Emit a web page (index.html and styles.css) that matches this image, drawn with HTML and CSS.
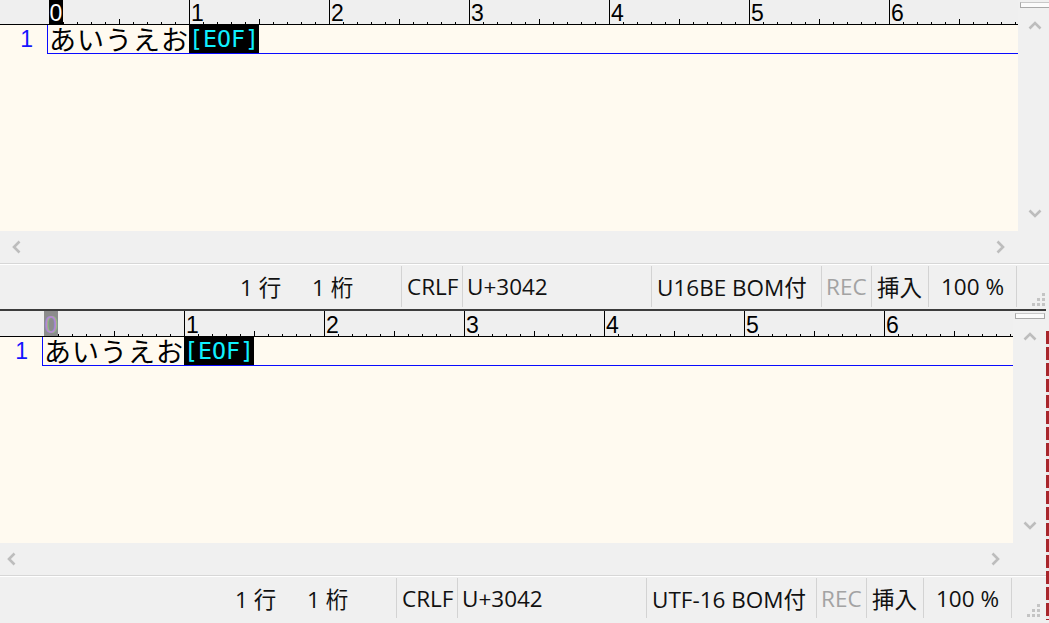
FILE: index.html
```html
<!DOCTYPE html>
<html lang="ja">
<head>
<meta charset="utf-8">
<title>Editor</title>
<link rel="stylesheet" href="styles.css">
</head>
<body>
<div class="desk">
  <section class="win win-a">
    <div class="main">
      <div class="pane-left">
        <div class="ruler">
          <div class="cell"><span class="num zero">0</span></div>
          <div class="cell"><span class="num">1</span></div>
          <div class="cell"><span class="num">2</span></div>
          <div class="cell"><span class="num">3</span></div>
          <div class="cell"><span class="num">4</span></div>
          <div class="cell"><span class="num">5</span></div>
          <div class="cell"><span class="num">6</span></div>
        </div>
        <div class="editor">
          <div class="line">
            <span class="lnum">1</span>
            <span class="text"><span class="jp">あいうえお</span><span class="eof">[EOF]</span></span>
          </div>
        </div>
      </div>
      <div class="vscroll">
        <div class="split-box"></div>
        <svg class="arr-v up" width="14" height="10" viewBox="0 0 14 10"><polyline points="1.5,8.5 7,3 12.5,8.5"/></svg>
        <svg class="arr-v down" width="14" height="10" viewBox="0 0 14 10"><polyline points="1.5,1.5 7,7 12.5,1.5"/></svg>
      </div>
    </div>
    <div class="hbar">
      <div class="hscroll">
        <svg class="arr-h" width="10" height="14" viewBox="0 0 10 14"><polyline points="8.5,1.5 3,7 8.5,12.5"/></svg>
        <svg class="arr-h" width="10" height="14" viewBox="0 0 10 14"><polyline points="1.5,1.5 7,7 1.5,12.5"/></svg>
      </div>
      <div class="corner"></div>
    </div>
    <div class="status">
      <div class="sp sp-pos"><span class="pos-row">1 行</span><span>1 桁</span></div>
      <div class="sp sp-eol">CRLF</div>
      <div class="sp sp-code">U+3042</div>
      <div class="sp sp-enc">U16BE BOM付</div>
      <div class="sp sp-rec">REC</div>
      <div class="sp sp-ins">挿入</div>
      <div class="sp sp-zoom">100 %</div>
      <div class="grip">
        <svg width="14" height="14" viewBox="0 0 14 14"><rect x="11" y="1" width="3" height="3"/><rect x="6" y="6" width="3" height="3"/><rect x="11" y="6" width="3" height="3"/><rect x="1" y="11" width="3" height="3"/><rect x="6" y="11" width="3" height="3"/><rect x="11" y="11" width="3" height="3"/></svg>
      </div>
    </div>
  </section>

  <div class="row-b">
    <section class="win win-b">
      <div class="main">
        <div class="pane-left">
          <div class="ruler">
            <div class="cell"><span class="num zero ghost">0</span></div>
            <div class="cell"><span class="num">1</span></div>
            <div class="cell"><span class="num">2</span></div>
            <div class="cell"><span class="num">3</span></div>
            <div class="cell"><span class="num">4</span></div>
            <div class="cell"><span class="num">5</span></div>
            <div class="cell"><span class="num">6</span></div>
          </div>
          <div class="editor">
            <div class="line">
              <span class="lnum">1</span>
              <span class="text"><span class="jp">あいうえお</span><span class="eof">[EOF]</span></span>
            </div>
          </div>
        </div>
        <div class="vscroll">
          <div class="split-box"></div>
          <svg class="arr-v up" width="14" height="10" viewBox="0 0 14 10"><polyline points="1.5,8.5 7,3 12.5,8.5"/></svg>
          <svg class="arr-v down" width="14" height="10" viewBox="0 0 14 10"><polyline points="1.5,1.5 7,7 12.5,1.5"/></svg>
        </div>
      </div>
      <div class="hbar">
        <div class="hscroll">
          <svg class="arr-h" width="10" height="14" viewBox="0 0 10 14"><polyline points="8.5,1.5 3,7 8.5,12.5"/></svg>
          <svg class="arr-h" width="10" height="14" viewBox="0 0 10 14"><polyline points="1.5,1.5 7,7 1.5,12.5"/></svg>
        </div>
        <div class="corner"></div>
      </div>
      <div class="status">
        <div class="sp sp-pos"><span class="pos-row">1 行</span><span>1 桁</span></div>
        <div class="sp sp-eol">CRLF</div>
        <div class="sp sp-code">U+3042</div>
        <div class="sp sp-enc">UTF-16 BOM付</div>
        <div class="sp sp-rec">REC</div>
        <div class="sp sp-ins">挿入</div>
        <div class="sp sp-zoom">100 %</div>
        <div class="grip">
          <svg width="14" height="14" viewBox="0 0 14 14"><rect x="11" y="1" width="3" height="3"/><rect x="6" y="6" width="3" height="3"/><rect x="11" y="6" width="3" height="3"/><rect x="1" y="11" width="3" height="3"/><rect x="6" y="11" width="3" height="3"/><rect x="11" y="11" width="3" height="3"/></svg>
        </div>
      </div>
    </section>
    <div class="edge"></div>
  </div>
</div>
</body>
</html>
```

FILE: styles.css
```css
html, body {
  margin: 0;
  padding: 0;
}

body {
  width: 1049px;
  height: 623px;
  overflow: hidden;
  background: #f0f0f0;
  color: #000;
}

.desk {
  display: flex;
  flex-direction: column;
  width: 1049px;
}

.win {
  flex: none;
  width: 1051px;
  background: #f0f0f0;
  display: flex;
  flex-direction: column;
}

.row-b {
  display: flex;
}

.win-b {
  margin-left: -5px;
  border-top: 2px solid #3c3c3c;
}

.edge {
  flex: none;
  width: 3px;
  margin-top: 22px;
  background: repeating-linear-gradient(to bottom, #a8262b 0 13px, #e9e9e9 13px 16px);
}

/* ---------- main: ruler + editor + vertical scrollbar ---------- */
.main {
  display: flex;
}

.pane-left {
  width: 1018px;
  display: flex;
  flex-direction: column;
}

.ruler {
  height: 25px;
  border-bottom: 1px solid #000;
  background: #efefef;
  padding-left: 49px;
  display: flex;
  overflow-x: clip;
  overflow-y: visible;
}

.win-a .ruler {
  height: 24px;
}

.cell {
  flex: none;
  width: 140px;
  height: 100%;
  background:
    linear-gradient(#000, #000) 0 0 / 1px 100% no-repeat,
    linear-gradient(#000, #000) 70px 100% / 1px 5px no-repeat,
    repeating-linear-gradient(to right, #000 0 1px, transparent 1px 14px) 0 100% / 100% 2px no-repeat;
}

.num {
  display: inline-block;
  padding-left: 2px;
  padding-top: 3px;
  font-family: "Liberation Sans", Arial, sans-serif;
  font-size: 23px;
  line-height: 22px;
  color: #000;
}

.win-a .num {
  padding-top: 2px;
}

.num.zero {
  width: 14px;
  height: 100%;
  box-sizing: border-box;
  padding-left: 0;
  text-align: center;
  background: #000;
  color: #fff;
}

.num.zero.ghost {
  background: #8c8c8c;
  color: #b58ad0;
  text-shadow: 1px 0 #7fc47f;
}

.editor {
  height: 206px;
  background: #fffaf0;
}

.line {
  display: flex;
  height: 29px;
}

.lnum {
  flex: none;
  width: 47px;
  box-sizing: border-box;
  padding-right: 14px;
  text-align: right;
  font-family: "Liberation Sans", Arial, sans-serif;
  font-size: 23px;
  line-height: 28px;
  color: #1414ff;
}

.text {
  flex: 1;
  display: flex;
  border-left: 1px solid #0a0aff;
  border-bottom: 1px solid #0a0aff;
  padding-left: 1px;
  height: 28px;
}

.jp {
  flex: none;
  width: 140px;
  font-family: "Noto Sans CJK JP", sans-serif;
  font-size: 27px;
  letter-spacing: 1px;
  line-height: 28px;
  white-space: nowrap;
  color: #000;
}

.eof {
  flex: none;
  width: 70px;
  height: 28px;
  background: #000;
  color: #10f0ff;
  font-family: "DejaVu Sans Mono", monospace;
  font-size: 23.3px;
  line-height: 28px;
  white-space: nowrap;
}

.vscroll {
  flex: none;
  width: 33px;
  background: #f0f0f0;
  display: flex;
  flex-direction: column;
  align-items: center;
}

.split-box {
  align-self: stretch;
  height: 4px;
  margin: 2px 1px 0 2px;
  border: 1px solid #a9a9a9;
  border-top-color: #c8c8c8;
  background: #fbfbfb;
}

.arr-v {
  display: block;
}

.arr-v.up {
  margin-top: 12px;
}

.arr-v.down {
  margin-top: auto;
  margin-bottom: 12px;
}

.arr-v polyline,
.arr-h polyline {
  fill: none;
  stroke: #bdbdbd;
  stroke-width: 2.6;
}

/* ---------- horizontal scrollbar ---------- */
.hbar {
  display: flex;
  height: 32px;
}

.hscroll {
  width: 1018px;
  box-sizing: border-box;
  padding: 0 12px 0 11px;
  display: flex;
  align-items: center;
  justify-content: space-between;
}

.arr-h {
  display: block;
}

.corner {
  flex: none;
  width: 33px;
}

/* ---------- status bar ---------- */
.status {
  height: 44px;
  border-top: 1px solid #d7d7d7;
  box-shadow: inset 0 1px 0 #ffffff;
  display: flex;
  font-family: "Open Sans", "Noto Sans CJK JP", sans-serif;
  font-size: 22.5px;
  color: #111;
}

.win-a .status {
  height: 45px;
}

.sp {
  flex: none;
  box-sizing: border-box;
  display: flex;
  align-items: center;
  margin: 2px 0;
  border-right: 1px solid #d3d3d3;
  white-space: nowrap;
}

.sp-pos { width: 402px; padding-left: 240px; }
.pos-row { width: 72px; }
.sp-eol { width: 61px; padding-left: 5px; }
.sp-code { width: 189px; padding-left: 4px; }
.sp-enc { width: 170px; padding-left: 5px; }
.sp-rec { width: 50px; padding-left: 4px; color: #a3a3a3; }
.sp-ins { width: 57px; padding-left: 5px; }
.sp-zoom { width: 88px; padding-left: 12px; }

.grip {
  flex: 1;
  display: flex;
  align-items: flex-end;
  justify-content: flex-end;
  padding: 0 6px 3px 0;
}

.grip svg {
  display: block;
  fill: #c4c4c4;
}
```
